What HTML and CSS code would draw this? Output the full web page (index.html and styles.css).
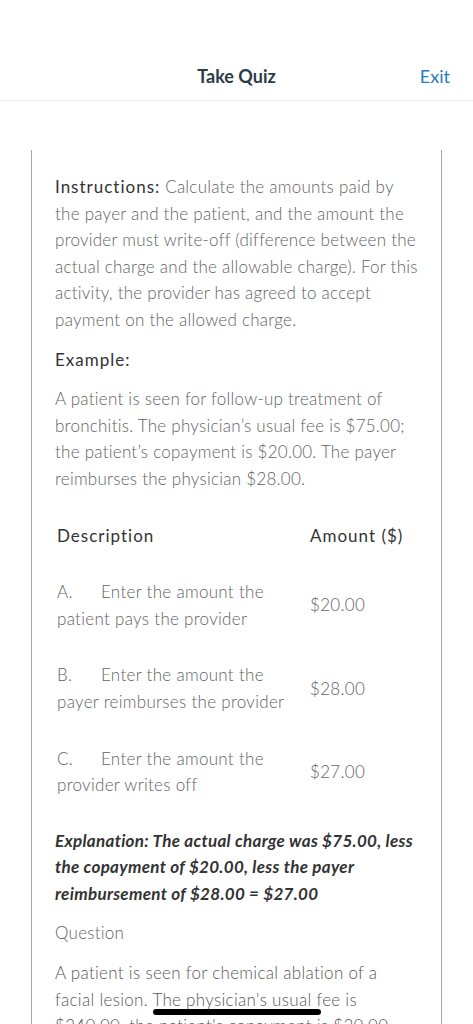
FILE: index.html
```html
<!DOCTYPE html>
<html lang="en">
<head>
    <meta charset="UTF-8">
    <meta name="viewport" content="width=device-width, initial-scale=1.0">
    <title>Take Quiz</title>
    <link rel="stylesheet" href="styles.css">
</head>
<body>
<div class="header">
    <div class="header-side"></div>
    <h1>Take Quiz</h1>
    <div class="header-side"><a href="#" class="exit">Exit</a></div>
</div>

<div class="quiz-frame">
    <p><span class="label">Instructions:</span> Calculate the amounts paid by the payer and the patient, and the amount the provider must write-off (difference between the actual charge and the allowable charge). For this activity, the provider has agreed to accept payment on the allowed charge.</p>
    <p class="label">Example:</p>
    <p>A patient is seen for follow-up treatment of bronchitis. The physician’s usual fee is $75.00; the patient’s copayment is $20.00. The payer reimburses the physician $28.00.</p>

    <div class="amount-table">
        <div class="cell head">Description</div>
        <div class="cell head">Amount ($)</div>

        <div class="cell"><span class="letter">A.</span>Enter the amount the patient pays the provider</div>
        <div class="cell amount">$20.00</div>

        <div class="cell"><span class="letter">B.</span>Enter the amount the payer reimburses the provider</div>
        <div class="cell amount">$28.00</div>

        <div class="cell"><span class="letter">C.</span>Enter the amount the provider writes off</div>
        <div class="cell amount">$27.00</div>
    </div>

    <p class="explanation">Explanation: The actual charge was $75.00, less the copayment of $20.00, less the payer reimbursement of $28.00 = $27.00</p>
    <p>Question</p>
    <p class="question">A patient is seen for chemical ablation of a facial lesion. The physician's usual fee is $240.00, the patient's copayment is $20.00. The payer reimburses the physician $150.00.</p>
</div>

<div class="home-indicator"></div>
</body>
</html>
```

FILE: styles.css
```css
* {
    margin: 0;
    padding: 0;
    box-sizing: border-box;
}
body {
    font-family: Lato, 'Noto Sans', sans-serif;
    background-color: #ffffff;
    color: #2d3b45;
    overflow: hidden;
}
.header {
    height: 101px;
    padding: 51px 23px 0 23px;
    border-bottom: 1px solid #ececec;
    display: flex;
    align-items: center;
    justify-content: space-between;
}
.header h1 {
    font-size: 18px;
    font-weight: bold;
    color: #2d3b45;
}
.header-side {
    width: 60px;
    text-align: right;
}
.exit {
    font-size: 18px;
    color: #2b7abc;
    text-decoration: none;
}
.quiz-frame {
    margin: 49px 31px 0 31px;
    border-left: 1px solid #a6a6a6;
    border-right: 1px solid #a6a6a6;
    padding: 24px 19px 40px 23px;
    min-height: 900px;
}
.quiz-frame p {
    font-size: 17px;
    line-height: 26.6px;
    font-weight: 300;
    letter-spacing: 0.25px;
    color: #626262;
    margin-bottom: 13px;
}
.quiz-frame p.label,
.quiz-frame .label {
    font-weight: normal;
    letter-spacing: 1px;
    color: #333333;
}
.amount-table {
    display: grid;
    grid-template-columns: 253px 1fr;
    margin: 15px 0 14px 0;
}
.cell {
    font-size: 17px;
    line-height: 26.6px;
    font-weight: 300;
    letter-spacing: 0.3px;
    color: #626262;
    padding: 15px 2px;
}
.cell.head {
    font-weight: normal;
    letter-spacing: 1px;
    color: #333333;
}
.cell.amount {
    display: flex;
    align-items: center;
}
.letter {
    display: inline-block;
    width: 44px;
}
.quiz-frame p.explanation {
    font-weight: bold;
    font-style: italic;
    letter-spacing: 0.3px;
    color: #333333;
}
.quiz-frame p.question {
    color: #585858;
    letter-spacing: 0.3px;
    margin-right: 4px;
}
.home-indicator {
    position: fixed;
    left: 50%;
    bottom: 9px;
    width: 168px;
    height: 6px;
    margin-left: -84px;
    border-radius: 3px;
    background: #000000;
}
```
